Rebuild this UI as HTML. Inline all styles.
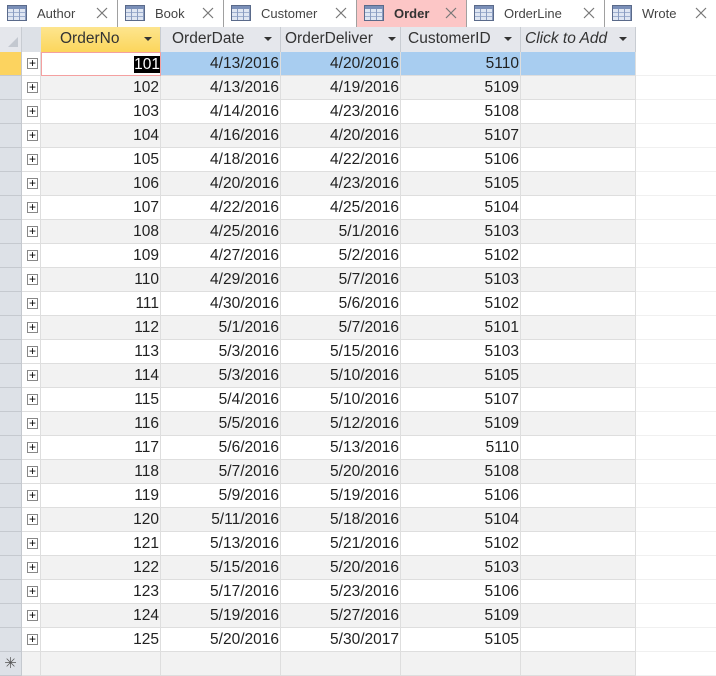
<!DOCTYPE html>
<html><head><meta charset="utf-8"><style>
*{box-sizing:border-box;margin:0;padding:0}
body{width:716px;height:667px;overflow:hidden;background:#fff;font-family:"Liberation Sans",sans-serif;position:relative}
.tabs{position:absolute;top:0;left:0;width:716px;height:27px;background:#fff}
.tab{position:absolute;top:0;height:27px;border-right:1px solid #a0a0a0;font-size:13px;color:#444;}
.tab .ic{position:absolute;left:7px;top:5px;width:20px;height:16px;border:1px solid #5a6a8a;background:
linear-gradient(#7a8fb8,#7a8fb8) 0 0/100% 3px no-repeat,
repeating-linear-gradient(90deg,transparent 0 5px,#8a9cc0 5px 6px),
repeating-linear-gradient(0deg,#dfe6f2 0 3px,#9fb0d0 3px 4px);}
.tab .t{position:absolute;left:37px;top:6px}
.tab svg.x{position:absolute;right:9px;top:7px}
.row{position:absolute;left:0;width:716px;height:24px;border-bottom:1px solid #f0f0f0;font-size:15.5px;color:#222}
.c{position:absolute;top:0;height:24px;border-right:1px solid #dedede;border-bottom:1px solid #dedede;text-align:right;padding-right:1px;line-height:23px;white-space:nowrap;overflow:hidden}
.sel{left:0;width:22px;background:#dde1e7;border-right:1px solid #c5c9cf;border-bottom:1px solid #c5c9cf}
.ex{left:22px;width:19px;background:#fff}
.ex b{position:absolute;left:5px;top:6px;width:11px;height:11px;border:1px solid #888;background:#fff;font-weight:normal;font-size:12px;line-height:9px;text-align:center;color:#000}
.a{left:41px;width:120px}.b{left:161px;width:120px}.d{left:281px;width:120px}.e{left:401px;width:120px}.f{left:521px;width:115px}
.alt .a,.alt .b,.alt .d,.alt .e,.alt .f{background:#f2f2f2}
.hdr .c{background:#e5e7ec;text-align:left;padding-left:11px;color:#333;font-size:15.5px;border-right:1px solid #c8ccd2;border-bottom:none}
.hdr .c i.dd{position:absolute;right:8px;top:10px;width:0;height:0;border-left:4px solid transparent;border-right:4px solid transparent;border-top:4px solid #333}
</style></head><body>
<div class="tabs">
<div class="tab" style="left:0;width:118px"><div class="ic"></div><span class="t">Author</span><svg class="x" width="12" height="12"><path d="M1 1L11 11M11 1L1 11" stroke="#777" stroke-width="1.2"/></svg></div>
<div class="tab" style="left:118px;width:106px"><div class="ic"></div><span class="t">Book</span><svg class="x" width="12" height="12"><path d="M1 1L11 11M11 1L1 11" stroke="#777" stroke-width="1.2"/></svg></div>
<div class="tab" style="left:224px;width:133px"><div class="ic"></div><span class="t">Customer</span><svg class="x" width="12" height="12"><path d="M1 1L11 11M11 1L1 11" stroke="#777" stroke-width="1.2"/></svg></div>
<div class="tab" style="left:357px;width:110px;background:#fcc6c6"><div class="ic"></div><span class="t" style="font-weight:bold;color:#333">Order</span><svg class="x" width="12" height="12"><path d="M1 1L11 11M11 1L1 11" stroke="#777" stroke-width="1.2"/></svg></div>
<div class="tab" style="left:467px;width:138px"><div class="ic"></div><span class="t">OrderLine</span><svg class="x" width="12" height="12"><path d="M1 1L11 11M11 1L1 11" stroke="#777" stroke-width="1.2"/></svg></div>
<div class="tab" style="left:605px;width:111px;border-right:none"><div class="ic"></div><span class="t">Wrote</span><svg class="x" width="12" height="12"><path d="M1 1L11 11M11 1L1 11" stroke="#777" stroke-width="1.2"/></svg></div>
</div>
<div class="row hdr" style="top:27px;height:25px;border-bottom:none">
<div class="c sel" style="height:25px;border-bottom:none"><svg width="22" height="25" style="position:absolute;left:0;top:0"><path d="M8 20 L18 10 L18 20Z" fill="#c3c8d0"/></svg></div>
<div class="c" style="left:22px;width:19px;height:25px;background:#dde1e7;border-right:none"></div>
<div class="c a" style="background:linear-gradient(#fde58e,#fcd65c);height:25px;padding-left:19px">OrderNo<i class="dd"></i></div>
<div class="c b" style="height:25px">OrderDate<i class="dd"></i></div>
<div class="c d" style="height:25px;padding-left:4px">OrderDeliver<i class="dd" style="right:4px"></i></div>
<div class="c e" style="height:25px;padding-left:7px">CustomerID<i class="dd"></i></div>
<div class="c f" style="height:25px;padding-left:4px;font-style:italic">Click to Add<i class="dd"></i></div>
</div>

<div class="row" style="top:52px"><div class="c sel" style="background:#fcd35f"></div><div class="c ex"><b>+</b></div><div class="c a" style="border:1px solid #f4a0a0;padding-right:0"><span style="background:#000;color:#fff">101</span></div><div class="c b" style="background:#a8cdf0">4/13/2016</div><div class="c d" style="background:#a8cdf0">4/20/2016</div><div class="c e" style="background:#a8cdf0">5110</div><div class="c f" style="background:#a8cdf0"></div></div>
<div class="row alt" style="top:76px"><div class="c sel"></div><div class="c ex"><b>+</b></div><div class="c a">102</div><div class="c b">4/13/2016</div><div class="c d">4/19/2016</div><div class="c e">5109</div><div class="c f"></div></div>
<div class="row" style="top:100px"><div class="c sel"></div><div class="c ex"><b>+</b></div><div class="c a">103</div><div class="c b">4/14/2016</div><div class="c d">4/23/2016</div><div class="c e">5108</div><div class="c f"></div></div>
<div class="row alt" style="top:124px"><div class="c sel"></div><div class="c ex"><b>+</b></div><div class="c a">104</div><div class="c b">4/16/2016</div><div class="c d">4/20/2016</div><div class="c e">5107</div><div class="c f"></div></div>
<div class="row" style="top:148px"><div class="c sel"></div><div class="c ex"><b>+</b></div><div class="c a">105</div><div class="c b">4/18/2016</div><div class="c d">4/22/2016</div><div class="c e">5106</div><div class="c f"></div></div>
<div class="row alt" style="top:172px"><div class="c sel"></div><div class="c ex"><b>+</b></div><div class="c a">106</div><div class="c b">4/20/2016</div><div class="c d">4/23/2016</div><div class="c e">5105</div><div class="c f"></div></div>
<div class="row" style="top:196px"><div class="c sel"></div><div class="c ex"><b>+</b></div><div class="c a">107</div><div class="c b">4/22/2016</div><div class="c d">4/25/2016</div><div class="c e">5104</div><div class="c f"></div></div>
<div class="row alt" style="top:220px"><div class="c sel"></div><div class="c ex"><b>+</b></div><div class="c a">108</div><div class="c b">4/25/2016</div><div class="c d">5/1/2016</div><div class="c e">5103</div><div class="c f"></div></div>
<div class="row" style="top:244px"><div class="c sel"></div><div class="c ex"><b>+</b></div><div class="c a">109</div><div class="c b">4/27/2016</div><div class="c d">5/2/2016</div><div class="c e">5102</div><div class="c f"></div></div>
<div class="row alt" style="top:268px"><div class="c sel"></div><div class="c ex"><b>+</b></div><div class="c a">110</div><div class="c b">4/29/2016</div><div class="c d">5/7/2016</div><div class="c e">5103</div><div class="c f"></div></div>
<div class="row" style="top:292px"><div class="c sel"></div><div class="c ex"><b>+</b></div><div class="c a">111</div><div class="c b">4/30/2016</div><div class="c d">5/6/2016</div><div class="c e">5102</div><div class="c f"></div></div>
<div class="row alt" style="top:316px"><div class="c sel"></div><div class="c ex"><b>+</b></div><div class="c a">112</div><div class="c b">5/1/2016</div><div class="c d">5/7/2016</div><div class="c e">5101</div><div class="c f"></div></div>
<div class="row" style="top:340px"><div class="c sel"></div><div class="c ex"><b>+</b></div><div class="c a">113</div><div class="c b">5/3/2016</div><div class="c d">5/15/2016</div><div class="c e">5103</div><div class="c f"></div></div>
<div class="row alt" style="top:364px"><div class="c sel"></div><div class="c ex"><b>+</b></div><div class="c a">114</div><div class="c b">5/3/2016</div><div class="c d">5/10/2016</div><div class="c e">5105</div><div class="c f"></div></div>
<div class="row" style="top:388px"><div class="c sel"></div><div class="c ex"><b>+</b></div><div class="c a">115</div><div class="c b">5/4/2016</div><div class="c d">5/10/2016</div><div class="c e">5107</div><div class="c f"></div></div>
<div class="row alt" style="top:412px"><div class="c sel"></div><div class="c ex"><b>+</b></div><div class="c a">116</div><div class="c b">5/5/2016</div><div class="c d">5/12/2016</div><div class="c e">5109</div><div class="c f"></div></div>
<div class="row" style="top:436px"><div class="c sel"></div><div class="c ex"><b>+</b></div><div class="c a">117</div><div class="c b">5/6/2016</div><div class="c d">5/13/2016</div><div class="c e">5110</div><div class="c f"></div></div>
<div class="row alt" style="top:460px"><div class="c sel"></div><div class="c ex"><b>+</b></div><div class="c a">118</div><div class="c b">5/7/2016</div><div class="c d">5/20/2016</div><div class="c e">5108</div><div class="c f"></div></div>
<div class="row" style="top:484px"><div class="c sel"></div><div class="c ex"><b>+</b></div><div class="c a">119</div><div class="c b">5/9/2016</div><div class="c d">5/19/2016</div><div class="c e">5106</div><div class="c f"></div></div>
<div class="row alt" style="top:508px"><div class="c sel"></div><div class="c ex"><b>+</b></div><div class="c a">120</div><div class="c b">5/11/2016</div><div class="c d">5/18/2016</div><div class="c e">5104</div><div class="c f"></div></div>
<div class="row" style="top:532px"><div class="c sel"></div><div class="c ex"><b>+</b></div><div class="c a">121</div><div class="c b">5/13/2016</div><div class="c d">5/21/2016</div><div class="c e">5102</div><div class="c f"></div></div>
<div class="row alt" style="top:556px"><div class="c sel"></div><div class="c ex"><b>+</b></div><div class="c a">122</div><div class="c b">5/15/2016</div><div class="c d">5/20/2016</div><div class="c e">5103</div><div class="c f"></div></div>
<div class="row" style="top:580px"><div class="c sel"></div><div class="c ex"><b>+</b></div><div class="c a">123</div><div class="c b">5/17/2016</div><div class="c d">5/23/2016</div><div class="c e">5106</div><div class="c f"></div></div>
<div class="row alt" style="top:604px"><div class="c sel"></div><div class="c ex"><b>+</b></div><div class="c a">124</div><div class="c b">5/19/2016</div><div class="c d">5/27/2016</div><div class="c e">5109</div><div class="c f"></div></div>
<div class="row" style="top:628px"><div class="c sel"></div><div class="c ex"><b>+</b></div><div class="c a">125</div><div class="c b">5/20/2016</div><div class="c d">5/30/2017</div><div class="c e">5105</div><div class="c f"></div></div>
<div class="row alt" style="top:652px"><div class="c sel" style="text-align:center;padding:0;font-size:15px;color:#555">✳</div><div class="c ex" style="background:#f2f2f2"></div><div class="c a"></div><div class="c b"></div><div class="c d"></div><div class="c e"></div><div class="c f"></div></div>
</body></html>
